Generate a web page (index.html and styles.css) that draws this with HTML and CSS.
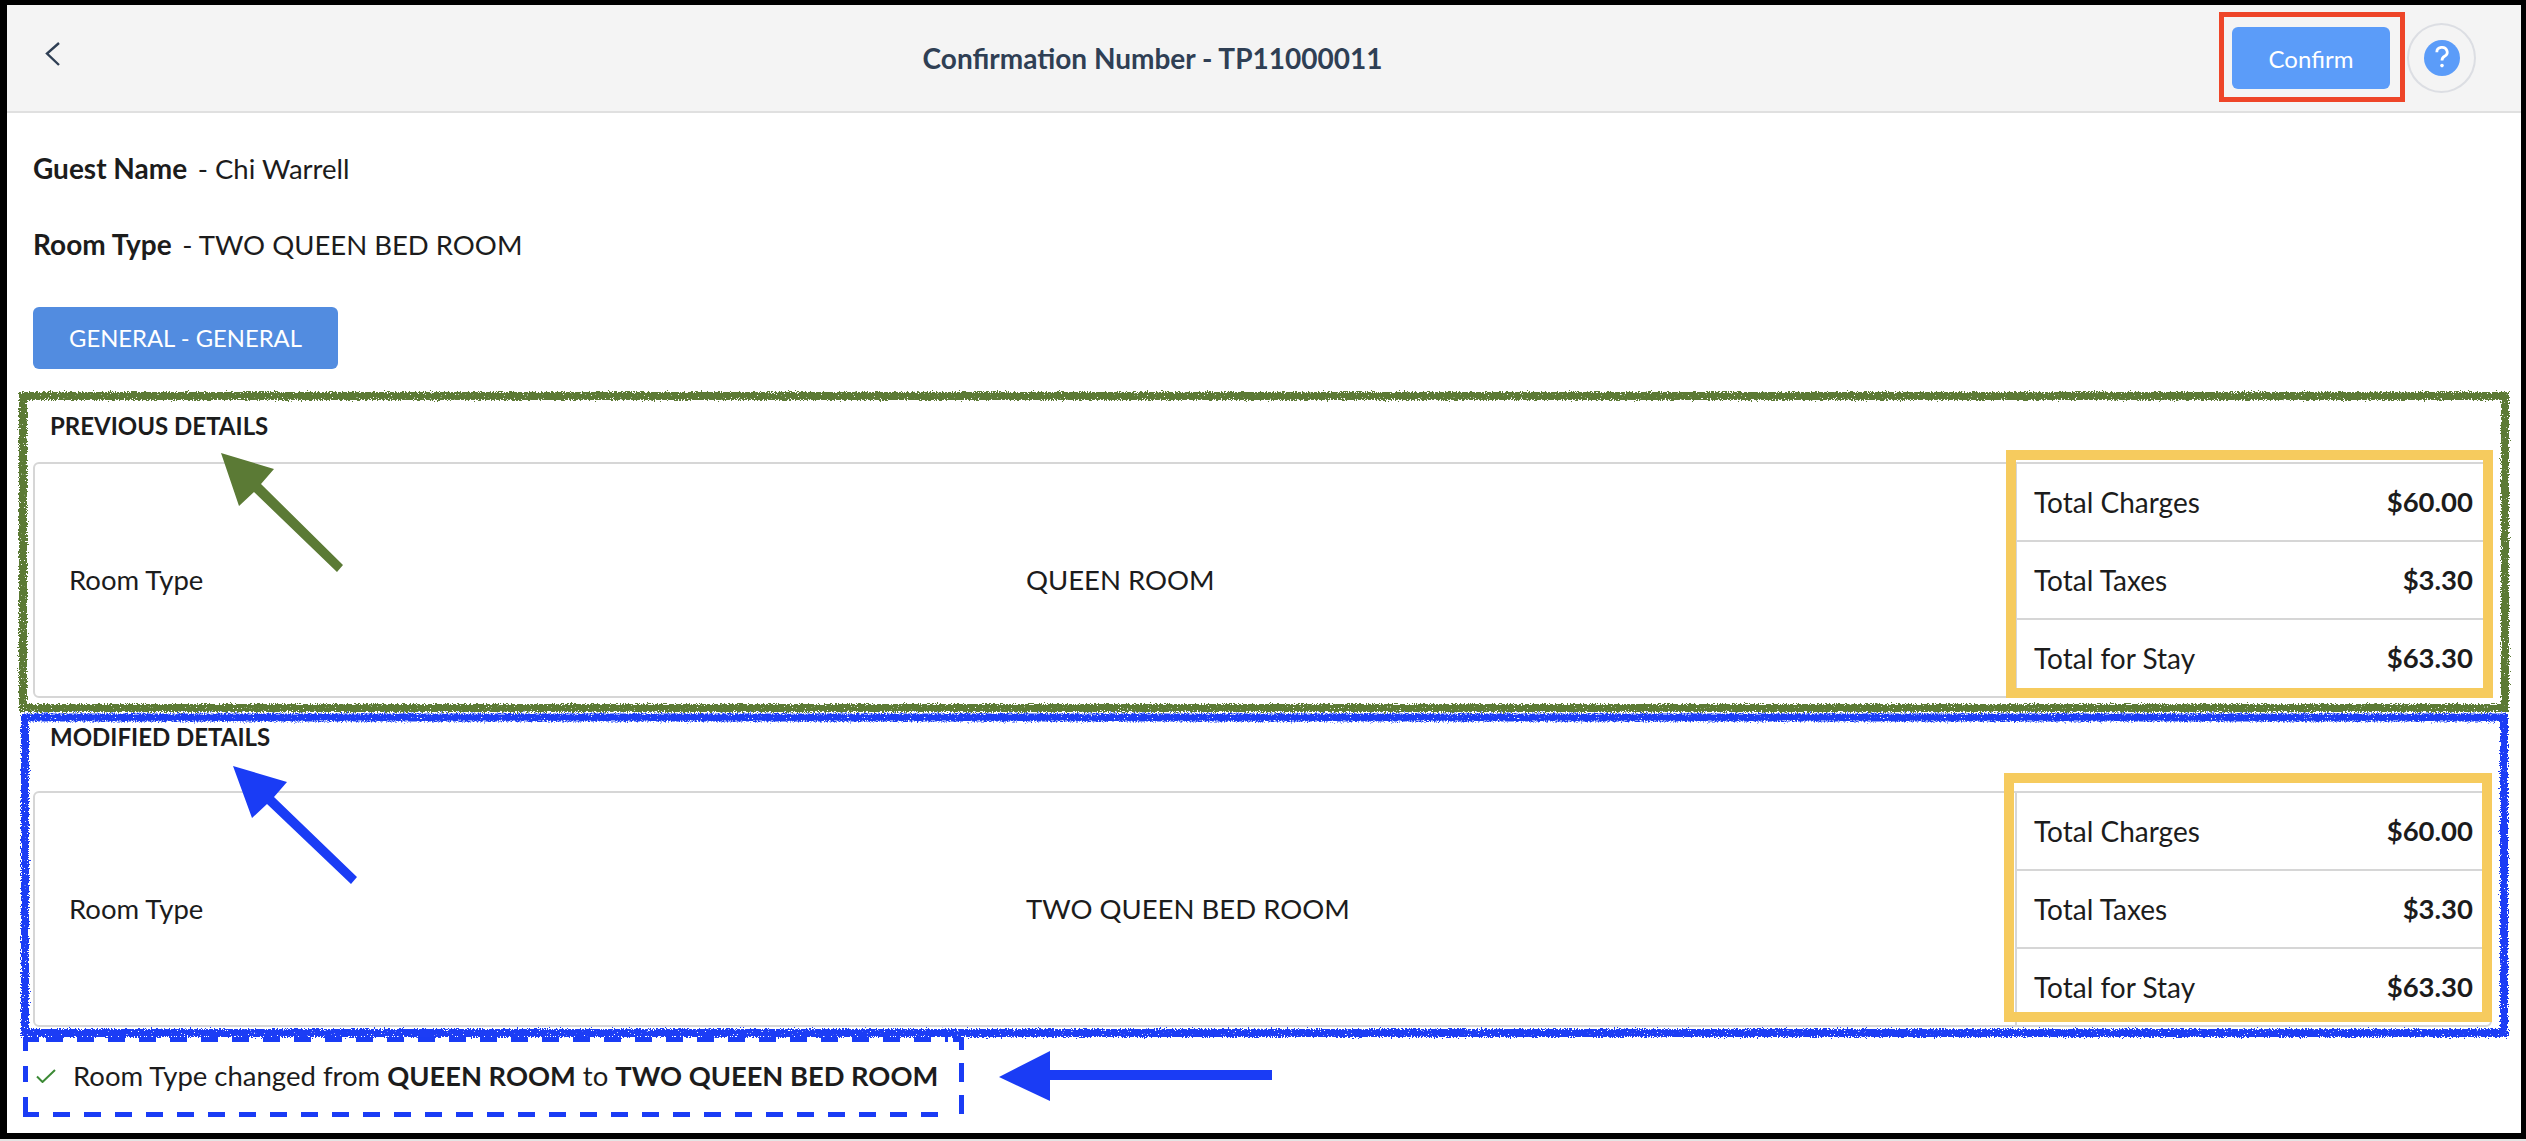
FILE: index.html
```html
<!DOCTYPE html>
<html lang="en">
<head>
<meta charset="utf-8">
<title>Confirmation Number - TP11000011</title>
<link rel="stylesheet" href="styles.css">
</head>
<body>
<div class="frame">
  <header class="topbar">
    <button class="back" aria-label="Back">
      <svg width="16" height="26" viewBox="0 0 16 26"><path class="chev" d="M14 2 L2 12.5 L14 24"/></svg>
    </button>
    <h1 class="title">Confirmation Number - TP11000011</h1>
    <div class="actions">
      <button class="confirm">Confirm</button>
      <button class="help" aria-label="Help">
        <svg width="36" height="36" viewBox="0 0 36 36"><circle class="help-disc" cx="18" cy="18" r="18"/><path class="help-mark" d="M12.8 12.2a5.2 4.8 0 1 1 7.8 4.1c-1.7 1-2.6 1.8-2.6 4.2"/><circle class="help-dot" cx="18" cy="25.6" r="1.8"/></svg>
      </button>
    </div>
  </header>
  <main class="content">
    <p class="info"><b>Guest Name</b> - Chi Warrell</p>
    <p class="info"><b>Room Type</b> - TWO QUEEN BED ROOM</p>
    <button class="tag">GENERAL - GENERAL</button>

    <h2 class="heading prev">PREVIOUS DETAILS</h2>
    <section class="card">
      <div class="cell">Room Type</div>
      <div class="cell">QUEEN ROOM</div>
      <div class="totals">
        <div class="row"><span>Total Charges</span><b>$60.00</b></div>
        <div class="row"><span>Total Taxes</span><b>$3.30</b></div>
        <div class="row"><span>Total for Stay</span><b>$63.30</b></div>
      </div>
    </section>

    <h2 class="heading mod">MODIFIED DETAILS</h2>
    <section class="card">
      <div class="cell">Room Type</div>
      <div class="cell">TWO QUEEN BED ROOM</div>
      <div class="totals">
        <div class="row"><span>Total Charges</span><b>$60.00</b></div>
        <div class="row"><span>Total Taxes</span><b>$3.30</b></div>
        <div class="row"><span>Total for Stay</span><b>$63.30</b></div>
      </div>
    </section>

    <p class="change">
      <svg class="tick" width="20" height="14" viewBox="0 0 20 14"><path d="M1 7.5 L6.5 13 L19 1"/></svg>
      <span>Room Type changed from <b>QUEEN ROOM</b> to <b>TWO QUEEN BED ROOM</b></span>
    </p>
  </main>
</div>

<svg class="marks" width="2526" height="1141" viewBox="0 0 2526 1141" aria-hidden="true">
  <defs>
    <filter id="rough" filterUnits="userSpaceOnUse" x="0" y="380" width="2526" height="680">
      <feTurbulence type="fractalNoise" baseFrequency="0.7" numOctaves="2" seed="4" result="n"/>
      <feDisplacementMap in="SourceGraphic" in2="n" scale="6" xChannelSelector="R" yChannelSelector="G" result="d"/>
      <feColorMatrix in="n" type="matrix" values="0 0 0 0 0  0 0 0 0 0  0 0 0 0 0  0 0 0 14 -3" result="m"/>
      <feComposite in="d" in2="m" operator="in"/>
    </filter>
  </defs>
  <rect class="mark-green" x="23" y="396" width="2482" height="312" filter="url(#rough)"/>
  <rect class="mark-blue" x="25" y="717.5" width="2479" height="315.5" filter="url(#rough)"/>
  <rect class="mark-red" x="2221.5" y="14.5" width="181" height="85"/>
  <rect class="mark-yellow" x="2011" y="455" width="477" height="238"/>
  <rect class="mark-yellow" x="2009" y="778" width="478" height="239"/>
  <path class="dash dash-h" d="M46 1039.5H948"/>
  <path class="dash" d="M25.5 1051V1039.5H39"/>
  <path class="dash" d="M953 1039.5H961.500V1050"/>
  <path class="dash" d="M961.500 1063V1082M961.500 1095V1114"/>
  <path class="dash" d="M25.500 1066V1082"/>
  <path class="dash" d="M25.500 1097V1114.500H39"/>
  <path class="dash dash-h" d="M53 1114.500H948"/>
  <polygon class="arrow-green" points="221,453 274,469 261,484 343,565 337,572 254,492 239,506"/>
  <polygon class="arrow-blue" points="233,766 287,782 274,797 357,877 351,884 267,804 252,818"/>
  <polygon class="arrow-blue" points="999,1077 1050,1051 1050,1070 1272,1070 1272,1080 1050,1080 1050,1101"/>
</svg>
</body>
</html>
```
FILE: styles.css
```css
* { box-sizing: border-box; }
html, body { margin: 0; padding: 0; }
body {
  position: relative;
  width: 2526px;
  height: 1141px;
  overflow: hidden;
  background: #e4e4e4;
  font-family: "Lato", "Liberation Sans", sans-serif;
  font-size: 27.5px;
  color: #1c1c1c;
}
button { font-family: inherit; border: 0; padding: 0; cursor: pointer; }
b { font-weight: 700; }

.frame {
  height: 1139px;
  background: #fff;
  border-style: solid;
  border-color: #000;
  border-width: 5px 5px 6px 7px;
}

.topbar {
  height: 108px;
  display: flex;
  align-items: center;
  justify-content: space-between;
  padding: 0 45px 0 38px;
  background: #f4f4f4;
  border-bottom: 2px solid #e0e0e0;
}
.back { width: 28px; background: none; text-align: left; margin-bottom: 8px; line-height: 0; }
.chev { fill: none; stroke: #2f3f54; stroke-width: 2.4; }
.title { margin: 0; font-size: 28px; font-weight: 700; color: #2f3f54; line-height: 32px; }
.actions { display: flex; align-items: center; gap: 17px; }
.confirm {
  width: 158px;
  height: 62px;
  border-radius: 6px;
  background: #5b9cf9;
  color: #fff;
  font-size: 24px;
}
.help {
  width: 69px;
  height: 70px;
  border-radius: 50%;
  border: 2px solid #dcdee3;
  background: none;
  display: flex;
  align-items: center;
  justify-content: center;
}
.help-disc { fill: #5b9cf9; }
.help-mark { fill: none; stroke: #fff; stroke-width: 2.8; }
.help-dot { fill: #fff; }

.content { padding: 39px 29px 0 26px; }
.info { height: 32px; margin: 0 0 44px; line-height: 32px; }
.info + .info { margin-bottom: 47px; }
.info b { font-size: 28px; margin-right: 3.5px; }
.tag {
  display: block;
  width: 305px;
  height: 62px;
  border-radius: 6px;
  background: #528ce0;
  color: #fff;
  font-size: 23.8px;
}

.heading { margin: 0; padding-left: 17px; font-size: 24px; font-weight: 700; line-height: 32px; }
.prev { margin-top: 41px; margin-bottom: 20px; }
.mod { margin-top: 23px; margin-bottom: 38px; }

.card {
  height: 236px;
  display: grid;
  grid-template-columns: 991px 989px 1fr;
  border: 2px solid #d6d6d6;
  border-radius: 6px;
}
.cell { display: flex; align-items: center; line-height: 32px; }
.cell:first-child { padding-left: 34px; }
.totals { border-left: 2px solid #d6d6d6; display: grid; grid-template-rows: 76px 78px 78px; }
.row {
  display: flex;
  justify-content: space-between;
  align-items: center;
  padding: 0 17px 1px;
  font-size: 28px;
  line-height: 32px;
}
.row b { font-size: 27.500px; }
.row + .row { border-top: 2px solid #d6d6d6; padding-top: 0; padding-bottom: 1px; }

.change { display: flex; align-items: center; height: 32px; margin: 33px 0 0; line-height: 32px; }
.change b { font-size: 27.3px; }
.tick { margin: 0 17px 0 3px; flex: none; fill: none; }
.tick path { fill: none; stroke: #3c8a35; stroke-width: 2; }

.marks { position: absolute; top: 0; left: 0; pointer-events: none; }
.marks rect { fill: none; }
.mark-green { stroke: #5b7a35; stroke-width: 8; }
.mark-blue { stroke: #1a3cf5; stroke-width: 8; }
.mark-red { stroke: #ee4528; stroke-width: 5; }
.mark-yellow { stroke: #f6cb5e; stroke-width: 10; }
.dash { fill: none; stroke: #1a3cf5; stroke-width: 5; }
.dash-h { stroke-dasharray: 17 14; }
.arrow-green { fill: #5b7a35; }
.arrow-blue { fill: #1a3cf5; }
```
